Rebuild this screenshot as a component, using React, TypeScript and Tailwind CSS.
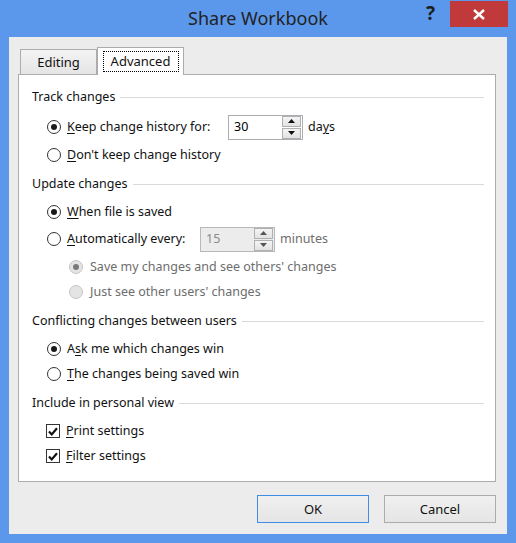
import React from "react";

function Radio({ checked, disabled }: { checked?: boolean; disabled?: boolean }) {
  return (
    <span
      className={
        disabled
          ? "flex h-[14px] w-[14px] shrink-0 items-center justify-center rounded-full border border-[#c4c4c4] bg-[#e4e4e4]"
          : "flex h-[14px] w-[14px] shrink-0 items-center justify-center rounded-full border border-[#333333] bg-white"
      }
    >
      {checked && (
        <span
          className={
            disabled
              ? "h-[6px] w-[6px] rounded-full bg-[#7a7a7a]"
              : "h-[6px] w-[6px] rounded-full bg-[#1a1a1a]"
          }
        />
      )}
    </span>
  );
}

function Check() {
  return (
    <span className="flex h-[14px] w-[14px] shrink-0 items-center justify-center border border-[#333333] bg-white">
      <svg width="10" height="9" viewBox="0 0 10 9">
        <path d="M1 4.6 L3.7 7.4 L9 1.2" fill="none" stroke="#111" strokeWidth="2.2" />
      </svg>
    </span>
  );
}

function U({ children }: { children: React.ReactNode }) {
  return <span className="underline decoration-1 underline-offset-2">{children}</span>;
}

function Heading({ children }: { children: React.ReactNode }) {
  return (
    <div className="flex h-[20px] items-center">
      <span className="whitespace-nowrap">{children}</span>
      <span className="ml-[5px] h-px flex-1 bg-[#d9d9d9]" />
    </div>
  );
}

function Spin({ value, disabled }: { value: string; disabled?: boolean }) {
  return (
    <div
      className={
        disabled
          ? "flex h-[25px] w-[75px] shrink-0 items-center border border-[#b8b8b8] bg-[#ececec] pr-px"
          : "flex h-[25px] w-[75px] shrink-0 items-center border border-[#abadb3] bg-white pr-px"
      }
    >
      <span className={disabled ? "flex-1 pl-[5px] text-[#8a8a8a]" : "flex-1 pl-[5px] text-black"}>{value}</span>
      <div className="flex w-[19px] flex-col gap-px">
        <div className="flex h-[11px] items-center justify-center border border-[#b0b0b0] bg-gradient-to-b from-[#f4f4f4] to-[#e2e2e2]">
          <svg width="7" height="4" viewBox="0 0 7 4">
            <path d="M0 4 L3.5 0 L7 4 Z" fill={disabled ? "#555" : "#111"} />
          </svg>
        </div>
        <div className="flex h-[11px] items-center justify-center border border-[#b0b0b0] bg-gradient-to-b from-[#f4f4f4] to-[#e2e2e2]">
          <svg width="7" height="4" viewBox="0 0 7 4">
            <path d="M0 0 L3.5 4 L7 0 Z" fill={disabled ? "#555" : "#111"} />
          </svg>
        </div>
      </div>
    </div>
  );
}

export default function App() {
  return (
    <div className="flex h-[543px] w-[516px] flex-col bg-[#5b98ec] font-['Noto_Sans',sans-serif] text-[12.5px] leading-none text-[#111]">
      {/* title bar */}
      <div className="relative flex h-[37px] shrink-0 items-center justify-center">
        <span className="pb-[1px] text-[18px] text-[#222]">Share Workbook</span>
        <span className="absolute left-[426px] top-[4px] text-[19px] font-bold text-[#1e1e1e]">?</span>
        <div className="absolute left-[450px] top-[1px] flex h-[26px] w-[58px] items-center justify-center bg-[#c0393b]">
          <svg width="12" height="11" viewBox="0 0 12 11">
            <path d="M1 1 L11 10 M11 1 L1 10" stroke="#fff" strokeWidth="2.4" />
          </svg>
        </div>
      </div>

      {/* body */}
      <div className="mx-[9px] mb-[9px] flex flex-1 flex-col bg-[#ececec] pl-[9px] pr-[11px]">
        {/* tabs */}
        <div className="mt-[10px] flex h-[27px] items-end pl-[2px]">
          <div className="flex h-[25px] w-[77px] items-center justify-center border border-b-0 border-[#acacac] bg-gradient-to-b from-[#f3f3f3] to-[#e5e5e5] text-[13px]">
            Editing
          </div>
          <div className="relative z-10 -mb-px flex h-[28px] w-[87px] justify-center border border-b-0 border-[#acacac] bg-white pt-[3px] text-[13px]">
            <span className="flex h-[21px] w-[76px] items-center justify-center border border-dotted border-black">Advanced</span>
          </div>
        </div>

        {/* panel */}
        <div className="flex h-[408px] flex-col border border-[#acacac] bg-white pl-[13px] pr-[11px] pt-[12px]">
          <Heading>Track changes</Heading>
          <div className="mt-[10px] flex h-[20px] items-center pl-[15px]">
            <div className="flex w-[181px] items-center gap-[6px]">
              <Radio checked />
              <span><U>K</U>eep change history for:</span>
            </div>
            <Spin value="30" />
            <span className="ml-[5px]">da<U>y</U>s</span>
          </div>
          <div className="mt-[8px] flex h-[20px] items-center gap-[6px] pl-[15px]">
            <Radio />
            <span><U>D</U>on't keep change history</span>
          </div>

          <div className="mt-[9px]">
            <Heading>Update changes</Heading>
          </div>
          <div className="mt-[8px] flex h-[20px] items-center gap-[6px] pl-[15px]">
            <Radio checked />
            <span><U>W</U>hen file is saved</span>
          </div>
          <div className="mt-[7px] flex h-[20px] items-center pl-[15px]">
            <div className="flex w-[153px] items-center gap-[6px]">
              <Radio />
              <span><U>A</U>utomatically every:</span>
            </div>
            <Spin value="15" disabled />
            <span className="ml-[5px] text-[#6d6d6d]">minutes</span>
          </div>
          <div className="mt-[8px] flex h-[20px] items-center gap-[7px] pl-[37px] text-[#6d6d6d]">
            <Radio checked disabled />
            <span>Save my changes and see others' changes</span>
          </div>
          <div className="mt-[5px] flex h-[20px] items-center gap-[7px] pl-[37px] text-[#6d6d6d]">
            <Radio disabled />
            <span>Just see other users' changes</span>
          </div>

          <div className="mt-[9px]">
            <Heading>Conflicting changes between users</Heading>
          </div>
          <div className="mt-[8px] flex h-[20px] items-center gap-[6px] pl-[15px]">
            <Radio checked />
            <span>A<U>s</U>k me which changes win</span>
          </div>
          <div className="mt-[5px] flex h-[20px] items-center gap-[6px] pl-[15px]">
            <Radio />
            <span><U>T</U>he changes being saved win</span>
          </div>

          <div className="mt-[9px]">
            <Heading>Include in personal view</Heading>
          </div>
          <div className="mt-[8px] flex h-[20px] items-center gap-[6px] pl-[14px]">
            <Check />
            <span><U>P</U>rint settings</span>
          </div>
          <div className="mt-[5px] flex h-[20px] items-center gap-[6px] pl-[14px]">
            <Check />
            <span><U>F</U>ilter settings</span>
          </div>
        </div>

        {/* buttons */}
        <div className="mt-[13px] flex justify-end gap-[15px]">
          <button className="flex h-[28px] w-[112px] items-center justify-center border border-[#3c8ee6] bg-gradient-to-b from-[#f0f0f0] to-[#e5e5e5] text-[13px] text-[#111]">
            OK
          </button>
          <button className="flex h-[28px] w-[112px] items-center justify-center border border-[#acacac] bg-gradient-to-b from-[#f0f0f0] to-[#e5e5e5] text-[13px] text-[#111]">
            Cancel
          </button>
        </div>
      </div>
    </div>
  );
}
